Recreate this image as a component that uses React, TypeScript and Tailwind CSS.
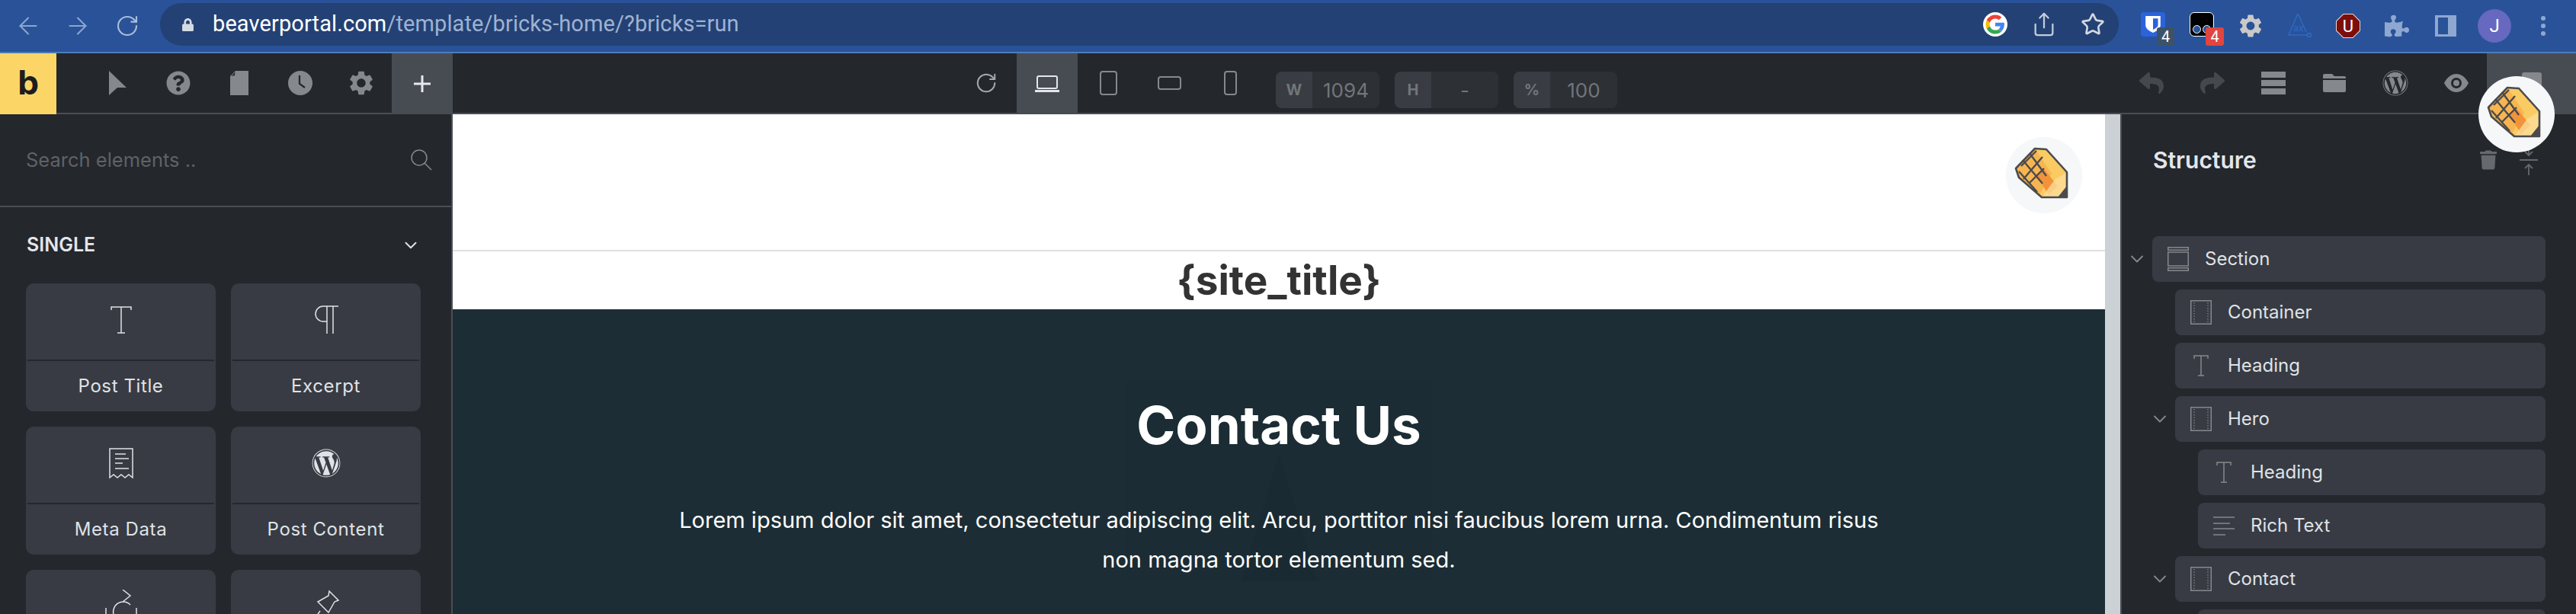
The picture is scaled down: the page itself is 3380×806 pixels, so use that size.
import * as React from 'react'
import {
    ArrowLeft,
    ArrowRight,
    ChevronDown,
    RotateCw,
    Share,
    Star,
} from 'lucide-react'
import {
    FaLock,
    FaPuzzlePiece,
    FaQuestionCircle,
    FaReply,
    FaShare,
    FaTrash,
    FaWordpress,
} from 'react-icons/fa'
import { MdSettings } from 'react-icons/md'

function Pencil() {
    return (
        <svg viewBox="0 0 100 100" className="w-[100px] h-[100px]">
            <path d="M38 15 L53 16 L80 46 L80 79 L47 79 L17 53 L13 41 Z" fill="#f9cb62" />
            <path d="M13 41 L38 15 L60 48 L44 75 L17 53 Z" fill="#f7b552" />
            <path d="M40 50 L50 42 L68 64 L56 76 Z" fill="#f2933a" />
            <path d="M64 56 L80 46 L80 79 L47 79 Z" fill="#fbdc9a" opacity="0.8" />
            <path d="M38 15 L53 16 L80 46 L80 79 L47 79 L17 53 L13 41 Z" fill="none" stroke="#4b4b4d" strokeWidth="2.600" strokeLinejoin="round" />
            <path d="M31 21 L53 51 M22 30 L48 61 M17 45 L41 72 M40 18 L20 38 M48 26 L23 55 M50 41 L31 60" stroke="#4b4b4d" strokeWidth="2.400" fill="none" />
            <path d="M80 64 L80 79 L68 79 Z" fill="#4b4b4d" />
        </svg>
    )
}

function GoogleG() {
    return (
        <div className="w-[32px] h-[32px] rounded-full bg-white flex items-center justify-center">
            <svg viewBox="0 0 48 48" className="w-[26px] h-[26px]">
                <path fill="#4285F4" d="M46 24.5c0-1.6-.1-3.1-.4-4.5H24v8.5h12.4c-.5 2.9-2.2 5.300-4.600 6.900l7.300 5.700C43.400 36.700 46 31.100 46 24.500z" />
                <path fill="#34A853" d="M24 47c6.200 0 11.400-2 15.100-5.500l-7.300-5.700c-2 1.400-4.600 2.200-7.800 2.200-6 0-11.100-4-12.900-9.500H3.500v5.900C7.300 41.900 15 47 24 47z" />
                <path fill="#FBBC05" d="M11.100 28.500c-.5-1.400-.7-2.900-.7-4.500s.3-3.100.7-4.500v-5.900H3.500C2 16.700 1 20.200 1 24s.9 7.300 2.500 10.400l7.600-5.900z" />
                <path fill="#EA4335" d="M24 10c3.400 0 6.400 1.200 8.800 3.400l6.500-6.500C35.400 3.300 30.200 1 24 1 15 1 7.300 6.100 3.500 13.600l7.600 5.900C12.900 14 18 10 24 10z" />
            </svg>
        </div>
    )
}

function ChromeCell({ children }: { children: React.ReactNode }) {
    return <div className="relative w-[64px] h-[68px] flex items-center justify-center">{children}</div>
}

function ChromeBar() {
    return (
        <div className="h-[70px] bg-[#2a5298] border-b-2 border-[#4d7cbc] flex items-start shrink-0">
            <div className="flex ml-[4px] mr-[11px] text-[#8ca6cf]">
                <div className="w-[65px] h-[68px] flex items-center justify-center"><ArrowLeft size={36} strokeWidth={1.4} /></div>
                <div className="w-[65px] h-[68px] flex items-center justify-center"><ArrowRight size={36} strokeWidth={1.4} /></div>
                <div className="w-[65px] h-[68px] flex items-center justify-center text-[#a9bcdc]"><RotateCw size={32} strokeWidth={1.6} /></div>
            </div>
            <div className="mt-[4px] w-[2570px] h-[56px] rounded-[28px] bg-[#234174] flex items-center pl-[28px] pr-[2px]">
                <FaLock className="text-[#d5dbe6] text-[17px] w-[17px] mr-[24px]" />
                <span className="text-[29px] text-[#9fb2d2] font-[Roboto,sans-serif] tracking-[0.1px]">
                    <span className="text-white">beaverportal.com</span>/template/bricks-home/?bricks=run
                </span>
                <div className="ml-auto flex items-center">
                    <div className="w-[64px] flex justify-center"><GoogleG /></div>
                    <div className="w-[64px] flex justify-center text-[#c3ccd9]"><Share size={34} strokeWidth={1.6} /></div>
                    <div className="w-[64px] flex justify-center text-[#d2d8e2]"><Star size={32} strokeWidth={2} /></div>
                </div>
            </div>
            <div className="ml-[13px] flex">
                <ChromeCell>
                    <div className="w-[32px] h-[32px] mb-[4px] rounded-[4px] bg-[#2b63dc] flex items-center justify-center">
                        <svg viewBox="0 0 20 22" className="w-[22px] h-[24px]"><path d="M1 1h18v11c0 4-4 7-9 9-5-2-9-5-9-9z" fill="#fff" /><path d="M10 4h6v8c0 2-3 4-6 5.500z" fill="#2b63dc" /></svg>
                    </div>
                    <span className="absolute left-[37px] top-[36px] w-[23px] h-[24px] rounded-[3px] bg-[#3d5266] text-white text-[20px] leading-[24px] text-center font-[Roboto,sans-serif]">4</span>
                </ChromeCell>
                <ChromeCell>
                    <div className="w-[32px] h-[32px] mb-[4px] rounded-[6px] bg-black border border-white flex items-end gap-[2px] pl-[3px] pb-[3px]">
                        <span className="w-[11px] h-[11px] rounded-full border border-white bg-[#2a5298]" />
                        <span className="w-[11px] h-[11px] rounded-full border border-white bg-[#2a5298]" />
                    </div>
                    <span className="absolute left-[37px] top-[36px] w-[24px] h-[24px] rounded-[3px] bg-[#e0453f] text-white text-[20px] leading-[24px] text-center font-[Roboto,sans-serif]">4</span>
                </ChromeCell>
                <ChromeCell>
                    <MdSettings className="text-[#c9c9c9] w-[36px] h-[36px]" />
                </ChromeCell>
                <ChromeCell>
                    <div className="relative w-[32px] h-[34px] mb-[2px]">
                        <svg viewBox="0 0 32 34" className="w-[32px] h-[34px]"><path d="M14 2 L2 30 H26" fill="none" stroke="#2c6bc4" strokeWidth="1.5" /><path d="M14 2 L25 26" fill="none" stroke="#2c6bc4" strokeWidth="1.5" /><circle cx="29" cy="30" r="2.500" fill="none" stroke="#2c6bc4" strokeWidth="1.500" /></svg>
                        <span className="absolute left-[8px] top-[14px] text-[#2c6bc4] text-[13px] leading-[14px] font-[Roboto,sans-serif]">ax</span>
                    </div>
                </ChromeCell>
                <ChromeCell>
                    <div className="w-[32px] h-[32px] bg-[#e8d8d8] flex items-center justify-center [clip-path:polygon(30%_0,70%_0,100%_30%,100%_70%,70%_100%,30%_100%,0_70%,0_30%)]">
                        <div className="w-[30px] h-[30px] bg-[#7d0f0b] flex items-center justify-center text-white text-[22px] font-[Roboto,sans-serif] [clip-path:polygon(30%_0,70%_0,100%_30%,100%_70%,70%_100%,30%_100%,0_70%,0_30%)]">U</div>
                    </div>
                </ChromeCell>
                <ChromeCell><FaPuzzlePiece className="text-[#8ea8d2] w-[32px] h-[32px]" /></ChromeCell>
                <ChromeCell>
                    <div className="w-[28px] h-[28px] bg-[#2a5298] border-[#8ea8d2] border-y-[3px] border-l-[4px] border-r-[11px]" />
                </ChromeCell>
                <ChromeCell>
                    <div className="w-[44px] h-[44px] rounded-full bg-[#6669bf] text-white text-[24px] flex items-center justify-center font-[Roboto,sans-serif]">J</div>
                </ChromeCell>
                <ChromeCell>
                    <div className="flex flex-col gap-[4px]">
                        <span className="w-[6px] h-[6px] rounded-full bg-[#8ea8d2]" />
                        <span className="w-[6px] h-[6px] rounded-full bg-[#8ea8d2]" />
                        <span className="w-[6px] h-[6px] rounded-full bg-[#8ea8d2]" />
                    </div>
                </ChromeCell>
            </div>
        </div>
    )
}

function ToolCell({ children, active }: { children: React.ReactNode; active?: boolean }) {
    return (
        <div className={active ? 'w-[80px] h-[80px] bg-[#474c53] flex items-center justify-center' : 'w-[80px] h-[78px] flex items-center justify-center'}>
            {children}
        </div>
    )
}

function SizeBox({ label, value }: { label: string; value: string }) {
    return (
        <div className="w-[136px] h-[48px] rounded-[8px] bg-[#2d3035] flex overflow-hidden text-[#72757a]">
            <div className="w-[48px] bg-[#393c42] flex items-center justify-center text-[20px] font-bold">{label}</div>
            <div className="flex-1 flex items-center justify-center text-[26px]">{value}</div>
        </div>
    )
}

function Toolbar() {
    return (
        <div className="h-[80px] bg-[#24272c] border-b-2 border-[#4a4e55] flex items-start shrink-0 text-[#85888c]">
            <div className="w-[74px] h-[80px] bg-[#fbd667] flex items-center justify-center text-[#1d1d1d] text-[44px] font-bold leading-none pb-[4px]">b</div>
            <div className="w-[40px]" />
            <ToolCell>
                <svg viewBox="0 0 24 32" className="w-[24px] h-[32px]"><polygon points="1,0 24,22 12,22 1,32" fill="currentColor" /></svg>
            </ToolCell>
            <ToolCell><FaQuestionCircle className="w-[32px] h-[32px]" /></ToolCell>
            <ToolCell>
                <svg viewBox="0 0 24 32" className="w-[24px] h-[32px]"><path d="M7 0H24V32H0V7Z M1.500 7 L6 6 L6.500 1.500Z" fill="currentColor" fillRule="evenodd" /></svg>
            </ToolCell>
            <ToolCell>
                <svg viewBox="0 0 32 32" className="w-[32px] h-[32px]"><circle cx="16" cy="16" r="16" fill="currentColor" /><path d="M15 6v11l7 5" fill="none" stroke="#24272c" strokeWidth="2.200" /></svg>
            </ToolCell>
            <ToolCell><MdSettings className="w-[38px] h-[38px]" /></ToolCell>
            <ToolCell active>
                <svg viewBox="0 0 24 24" className="w-[24px] h-[24px]"><path d="M12 1v22M1 12h22" stroke="#e6e8eb" strokeWidth="3" /></svg>
            </ToolCell>

            <div className="ml-[660px] flex">
                <ToolCell><RotateCw size={30} strokeWidth={1.6} className="text-[#a5a7aa]" /></ToolCell>
                <ToolCell active>
                    <svg viewBox="0 0 32 22" className="w-[32px] h-[22px]"><rect x="3" y="1" width="26" height="16" rx="2" fill="none" stroke="#e4e6e9" strokeWidth="2" /><rect x="0" y="19" width="32" height="3" fill="#e4e6e9" /></svg>
                </ToolCell>
                <ToolCell><div className="w-[23px] h-[32px] rounded-[4px] border-2 border-[#85888c]" /></ToolCell>
                <ToolCell><div className="w-[31px] h-[18px] rounded-[4px] border-2 border-[#85888c]" /></ToolCell>
                <ToolCell><div className="w-[17px] h-[32px] rounded-[4px] border-2 border-[#85888c]" /></ToolCell>
                <div className="flex items-center gap-[20px] ml-[20px] mt-[16px]">
                    <SizeBox label="W" value="1094" />
                    <SizeBox label="H" value="-" />
                    <SizeBox label="%" value="100" />
                </div>
            </div>

            <div className="ml-auto flex text-[#85888c]">
                <ToolCell><FaReply className="w-[32px] h-[32px] text-[#45484d]" /></ToolCell>
                <ToolCell><FaShare className="w-[32px] h-[32px] text-[#45484d]" /></ToolCell>
                <ToolCell>
                    <div className="flex flex-col gap-[3px]">
                        <span className="w-[32px] h-[8px] bg-[#85888c]" />
                        <span className="w-[32px] h-[8px] bg-[#85888c]" />
                        <span className="w-[32px] h-[8px] bg-[#85888c]" />
                    </div>
                </ToolCell>
                <ToolCell>
                    <svg viewBox="0 0 30 24" className="w-[30px] h-[24px]"><path d="M2 0h10l3 3h13a2 2 0 0 1 2 2v1H0V2a2 2 0 0 1 2-2z M0 8h30v14a2 2 0 0 1-2 2H2a2 2 0 0 1-2-2z" fill="currentColor" /></svg>
                </ToolCell>
                <ToolCell><FaWordpress className="w-[34px] h-[34px]" /></ToolCell>
                <ToolCell>
                    <svg viewBox="0 0 32 24" className="w-[32px] h-[24px]"><path d="M0 12C4 4 10 0 16 0s12 4 16 12c-4 8-10 12-16 12S4 20 0 12z M16 5a7 7 0 1 0 0 14a7 7 0 0 0 0-14z M16 8a4 4 0 1 1 0 8a4 4 0 0 1 0-8z" fill="currentColor" fillRule="evenodd" /></svg>
                </ToolCell>
                <div className="w-[117px] h-[80px] bg-[#474c53] flex items-center justify-center">
                    <div className="w-[26px] h-[30px] rounded-[3px] bg-[#85888c]" />
                </div>
            </div>
        </div>
    )
}

const cardIconClass = 'w-[44px] h-[44px] text-[#dfe2e6]'

const cards = [
    {
        label: 'Post Title',
        icon: (
            <svg viewBox="0 0 44 44" className={cardIconClass} fill="none" stroke="currentColor" strokeWidth="1.5"><path d="M9 9V5h26v4M22 5v34M17 39h10" /></svg>
        ),
    },
    {
        label: 'Excerpt',
        icon: (
            <svg viewBox="0 0 44 44" className={cardIconClass} fill="none" stroke="currentColor" strokeWidth="1.5"><path d="M38 4H18a9 9 0 0 0 0 20h5M23 4v36M31 4v36" /></svg>
        ),
    },
    {
        label: 'Meta Data',
        icon: (
            <svg viewBox="0 0 44 44" className={cardIconClass} fill="none" stroke="currentColor" strokeWidth="1.5"><path d="M7 3h30v38l-5-4-5 4-5-4-5 4-5-4-5 4z" /><path d="M14 10h14M14 16h18M14 22h10M14 29h18" /></svg>
        ),
    },
    {
        label: 'Post Content',
        icon: <FaWordpress className="w-[38px] h-[38px] text-[#dfe2e6]" />,
    },
    {
        label: '',
        icon: (
            <svg viewBox="0 0 44 44" className={cardIconClass} fill="none" stroke="currentColor" strokeWidth="1.5"><path d="M34 20a13 13 0 1 0 -8 22M24 0l10 8-10 8" /><path d="M2 24v16M42 24v16" /></svg>
        ),
    },
    {
        label: '',
        icon: (
            <svg viewBox="0 0 44 44" className={cardIconClass} fill="none" stroke="currentColor" strokeWidth="1.5"><path d="M26 2l12 12-5 2-8 14-14-14 14-8zM14 28L4 42" /></svg>
        ),
    },
]

function LeftPanel() {
    return (
        <aside className="w-[594px] shrink-0 bg-[#24272c] border-r-2 border-[#4a4e55] flex flex-col overflow-hidden">
            <div className="h-[122px] shrink-0 border-b-2 border-[#4a4e55] flex items-center justify-between pl-[34px] pr-[24px] text-[#5f6267]">
                <span className="text-[25.500px]">Search elements ..</span>
                <svg viewBox="0 0 30 30" className="w-[30px] h-[30px]" fill="none" stroke="#85888c" strokeWidth="1.5"><circle cx="12" cy="12" r="10" /><path d="M19 19l9 9" /></svg>
            </div>
            <div className="h-[100px] shrink-0 flex items-center justify-between pl-[35px] pr-[40px]">
                <span className="text-[#e4e6ea] text-[25px] font-semibold">SINGLE</span>
                <ChevronDown size={26} strokeWidth={1.8} className="text-[#dfe2e6]" />
            </div>
            <div className="grid grid-cols-[249px_249px] gap-[20px] pl-[34px]">
                {cards.map((card, i) => (
                    <div key={i} className="h-[168px] rounded-[10px] bg-[#383b43] flex flex-col">
                        <div className="h-[100px] flex items-center justify-center pb-[4px]">{card.icon}</div>
                        <div className="h-[2px] mx-[2px] bg-[#24272c]" />
                        <div className="flex-1 flex items-center justify-center text-[#dfe2e6] text-[24px] tracking-[0.6px]">{card.label}</div>
                    </div>
                ))}
            </div>
        </aside>
    )
}

function Canvas() {
    return (
        <main className="w-[2168px] shrink-0 flex flex-col overflow-hidden bg-white">
            <div className="h-[180px] shrink-0 border-b-2 border-[#e0e0e0] flex justify-end pt-[30px] pr-[30px]">
                <div className="w-[100px] h-[100px] rounded-full bg-[#f6f7f9]"><Pencil /></div>
            </div>
            <div className="h-[76px] shrink-0 flex items-center justify-center pt-[2px] text-[#333] text-[53px] font-bold">{'{site_title}'}</div>
            <section className="relative flex-1 bg-[#1c2d35] flex flex-col items-center pt-[112px] text-white">
                <div className="absolute left-[884px] top-[91px] w-[401px] h-[266px] bg-[#1b2c34]">
                    <svg viewBox="0 0 400 266" className="w-full h-full"><path d="M150 266 L200 100 L250 266Z" fill="#1a2a32" /></svg>
                </div>
                <h1 className="relative text-[69px] leading-[80px] font-bold">Contact Us</h1>
                <p className="relative mt-[59px] w-[1620px] text-center text-[29px] leading-[52px]">
                    Lorem ipsum dolor sit amet, consectetur adipiscing elit. Arcu, porttitor nisi faucibus lorem urna. Condimentum risus non magna tortor elementum sed.
                </p>
            </section>
        </main>
    )
}

const treeIconClass = 'w-[28px] h-[32px] text-[#85888c]'

const sectionIcon = (
    <svg viewBox="0 0 28 32" className={treeIconClass} fill="none" stroke="currentColor" strokeWidth="1.5"><rect x="0.750" y="0.750" width="26.500" height="3.500" /><rect x="0.750" y="7" width="26.500" height="18" /><rect x="0.750" y="27.750" width="26.500" height="3.500" /></svg>
)
const containerIcon = (
    <svg viewBox="0 0 28 32" className={treeIconClass} fill="none" stroke="currentColor" strokeWidth="1.5"><rect x="0.750" y="0.750" width="26.500" height="30.500" /><path d="M5 3v26M23 3v26" strokeDasharray="1.500 2" strokeWidth="1.200" /></svg>
)
const headingIcon = (
    <svg viewBox="0 0 28 32" className={treeIconClass} fill="none" stroke="currentColor" strokeWidth="1.5"><path d="M5 7V3h18v4M14 3v26M10 29h8" /></svg>
)
const textIcon = (
    <svg viewBox="0 0 28 32" className={treeIconClass} fill="none" stroke="currentColor" strokeWidth="1.5"><path d="M0 5h28M0 13h22M0 20h28M0 28h16" /></svg>
)

const treeRows = [
    { label: 'Section', icon: sectionIcon, indent: '', open: true },
    { label: 'Container', icon: containerIcon, indent: 'pl-[30px]' },
    { label: 'Heading', icon: headingIcon, indent: 'pl-[30px]' },
    { label: 'Hero', icon: containerIcon, indent: 'pl-[30px]', open: true },
    { label: 'Heading', icon: headingIcon, indent: 'pl-[60px]' },
    { label: 'Rich Text', icon: textIcon, indent: 'pl-[60px]' },
    { label: 'Contact', icon: containerIcon, indent: 'pl-[30px]', open: true },
    { label: '', icon: null, indent: 'pl-[60px]' },
]

function StructurePanel() {
    return (
        <aside className="flex-1 bg-[#24272c] border-l-2 border-[#4a4e55] overflow-hidden">
            <div className="h-[120px] flex items-center justify-between pl-[41px] pr-[50px]">
                <span className="text-[#e4e6ea] text-[30px] font-semibold">Structure</span>
                <div className="flex items-center gap-[30px] text-[#66696e]">
                    <FaTrash className="w-[22px] h-[26px]" />
                    <svg viewBox="0 0 24 40" className="w-[24px] h-[40px]" fill="none" stroke="currentColor" strokeWidth="1.800"><path d="M0 20h24M12 0v14M7 9l5 5 5-5M12 40V26M7 31l5-5 5 5" /></svg>
                </div>
            </div>
            <div className="flex flex-col gap-[10px] mt-[40px] pr-[40px]">
                {treeRows.map((row, i) => (
                    <div key={i} className={`flex items-center h-[60px] shrink-0 ${row.indent}`}>
                        <div className="w-[40px] flex justify-center text-[#85888c]">
                            {row.open && <ChevronDown size={28} strokeWidth={1.6} />}
                        </div>
                        <div className="flex-1 h-[60px] rounded-[8px] bg-[#383b43] flex items-center pl-[20px]">
                            {row.icon}
                            <span className="ml-[21px] text-[#dfe2e6] text-[24px]">{row.label}</span>
                        </div>
                    </div>
                ))}
            </div>
        </aside>
    )
}

export default function App() {
    return (
        <div className="relative w-[3380px] h-[806px] overflow-hidden flex flex-col font-[Inter,sans-serif]">
            <ChromeBar />
            <Toolbar />
            <div className="flex flex-1 min-h-0">
                <LeftPanel />
                <Canvas />
                <div className="w-[20px] shrink-0 bg-[#ccd1d6]" />
                <StructurePanel />
            </div>
            <div className="absolute left-[3252px] top-[100px] w-[100px] h-[100px] rounded-full bg-[#f6f7f9]">
                <Pencil />
            </div>
        </div>
    )
}
